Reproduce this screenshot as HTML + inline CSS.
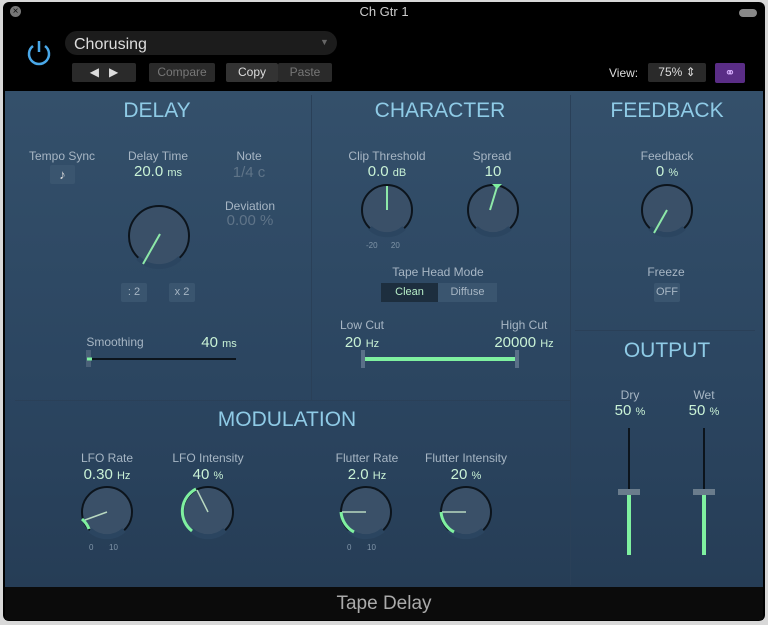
<!DOCTYPE html>
<html><head><meta charset="utf-8"><style>
body{margin:0;width:768px;height:625px;background:#d8d8d8;font-family:"Liberation Sans",sans-serif;overflow:hidden;position:relative}
.a{position:absolute;white-space:nowrap}
.lbl{color:#a7b6c4;font-size:12px;transform:translateX(-50%)}
.val{color:#c9f2d6;font-size:15px;transform:translateX(-50%)}
.val small{font-size:11px}
.ttl{color:#8fcbe6;font-size:21px;transform:translateX(-50%)}
.btn{background:#2a2a2a;color:#777;font-size:12px;text-align:center;line-height:19px;height:19px;border-radius:2px}
.sb{background:#3a556f;color:#a7b6c4;font-size:11px;text-align:center;line-height:19px;height:19px;border-radius:2px}
</style></head><body>
<div class="a" style="left:3px;top:2px;width:762px;height:619px;background:#000;border-radius:6px"></div>
<div class="a" style="left:10px;top:6px;width:11px;height:11px;border-radius:50%;background:#777;color:#111;font-size:10px;line-height:11px;text-align:center">×</div>
<div class="a" style="left:739px;top:9px;width:18px;height:8px;border-radius:4px;background:#888"></div>
<div class="a" style="left:0;top:4px;width:768px;text-align:center;color:#ccc;font-size:13px">Ch Gtr 1</div>
<svg class="a" style="left:24px;top:38px" width="30" height="30"><path d="M9 8 A10 10 0 1 0 21 8" fill="none" stroke="#4aa8e8" stroke-width="2.5"/><line x1="15" y1="3" x2="15" y2="14" stroke="#4aa8e8" stroke-width="2.5"/></svg>
<div class="a" style="left:65px;top:31px;width:272px;height:24px;border-radius:12px;background:#1c1c1c"></div>
<div class="a" style="left:74px;top:36px;color:#ddd;font-size:16px">Chorusing</div>
<div class="a" style="left:320px;top:37px;color:#666;font-size:9px">▼</div>
<div class="a btn" style="left:72px;top:63px;width:64px;color:#ddd">◀ &nbsp; ▶</div>
<div class="a btn" style="left:149px;top:63px;width:66px">Compare</div>
<div class="a btn" style="left:226px;top:63px;width:52px;background:#333;color:#ddd">Copy</div>
<div class="a btn" style="left:278px;top:63px;width:54px">Paste</div>
<div class="a" style="left:609px;top:66px;color:#ddd;font-size:12px">View:</div>
<div class="a btn" style="left:648px;top:63px;width:58px;color:#ddd;background:#2a2a2a">75% ⇕</div>
<div class="a" style="left:715px;top:63px;width:30px;height:20px;background:#5a2d86;border-radius:2px;color:#d9b0ff;font-size:13px;text-align:center;line-height:20px">⚭</div>
<div class="a" style="left:5px;top:91px;width:758px;height:496px;background:linear-gradient(#34506b,#2b4560 60%,#263d56)"></div>
<div class="a" style="left:5px;top:587px;width:758px;height:33px;background:#0b0b0b;color:#aaa;font-size:19px;text-align:center;line-height:33px">Tape Delay</div>
<div class="a" style="left:311px;top:95px;width:1px;height:305px;background:#2a4058"></div>
<div class="a" style="left:570px;top:95px;width:1px;height:490px;background:#2a4058"></div>
<div class="a" style="left:15px;top:400px;width:555px;height:1px;background:#2a4058"></div>
<div class="a" style="left:575px;top:330px;width:180px;height:1px;background:#2a4058"></div>
<div class="a ttl" style="left:157px;top:99px">DELAY</div>
<div class="a ttl" style="left:440px;top:99px">CHARACTER</div>
<div class="a ttl" style="left:667px;top:99px">FEEDBACK</div>
<div class="a ttl" style="left:667px;top:339px">OUTPUT</div>
<div class="a ttl" style="left:287px;top:408px">MODULATION</div>
<div class="a lbl" style="left:62px;top:149px">Tempo Sync</div>
<div class="a sb" style="left:50px;top:165px;width:25px;color:#ddd;font-size:13px">♪</div>
<div class="a lbl" style="left:158px;top:149px">Delay Time</div>
<div class="a val" style="left:158px;top:163px">20.0 <small>ms</small></div>
<div class="a lbl" style="left:249px;top:149px">Note</div>
<div class="a val" style="left:249px;top:164px;color:#5f7488">1/4 c</div>
<div class="a lbl" style="left:250px;top:199px">Deviation</div>
<div class="a val" style="left:250px;top:212px;color:#5f7488">0.00 %</div>
<div class="a sb" style="left:121px;top:283px;width:26px">: 2</div>
<div class="a sb" style="left:169px;top:283px;width:26px">x 2</div>
<div class="a lbl" style="left:115px;top:335px">Smoothing</div>
<div class="a val" style="left:219px;top:334px">40 <small>ms</small></div>
<div class="a lbl" style="left:387px;top:149px">Clip Threshold</div>
<div class="a val" style="left:387px;top:163px">0.0 <small>dB</small></div>
<div class="a lbl" style="left:492px;top:149px">Spread</div>
<div class="a val" style="left:493px;top:163px">10</div>
<div class="a" style="left:366px;top:241px;color:#8095a8;font-size:8px">-20 &nbsp; &nbsp; &nbsp;20</div>
<div class="a lbl" style="left:438px;top:265px">Tape Head Mode</div>
<div class="a" style="left:381px;top:283px;width:57px;height:19px;background:#1d2e3e;color:#b7eec8;font-size:11px;text-align:center;line-height:19px">Clean</div>
<div class="a sb" style="left:438px;top:283px;width:59px;border-radius:0">Diffuse</div>
<div class="a lbl" style="left:362px;top:318px">Low Cut</div>
<div class="a val" style="left:362px;top:334px">20 <small>Hz</small></div>
<div class="a lbl" style="left:524px;top:318px">High Cut</div>
<div class="a val" style="left:524px;top:334px">20000 <small>Hz</small></div>
<div class="a lbl" style="left:667px;top:149px">Feedback</div>
<div class="a val" style="left:667px;top:163px">0 <small>%</small></div>
<div class="a lbl" style="left:666px;top:265px">Freeze</div>
<div class="a sb" style="left:654px;top:283px;width:26px">OFF</div>
<div class="a lbl" style="left:630px;top:388px">Dry</div>
<div class="a val" style="left:630px;top:402px">50 <small>%</small></div>
<div class="a lbl" style="left:704px;top:388px">Wet</div>
<div class="a val" style="left:704px;top:402px">50 <small>%</small></div>
<div class="a lbl" style="left:107px;top:451px">LFO Rate</div>
<div class="a val" style="left:107px;top:466px">0.30 <small>Hz</small></div>
<div class="a lbl" style="left:208px;top:451px">LFO Intensity</div>
<div class="a val" style="left:208px;top:466px">40 <small>%</small></div>
<div class="a lbl" style="left:367px;top:451px">Flutter Rate</div>
<div class="a val" style="left:367px;top:466px">2.0 <small>Hz</small></div>
<div class="a lbl" style="left:466px;top:451px">Flutter Intensity</div>
<div class="a val" style="left:466px;top:466px">20 <small>%</small></div>
<div class="a" style="left:89px;top:543px;color:#8095a8;font-size:8px">0 &nbsp; &nbsp; &nbsp; 10</div>
<div class="a" style="left:347px;top:543px;color:#8095a8;font-size:8px">0 &nbsp; &nbsp; &nbsp; 10</div>
<svg class="a" style="left:0;top:0" width="768" height="625">
<g stroke-linecap="round" fill="#3a5068">
<circle cx="159" cy="236" r="30" stroke="#0c141c" stroke-width="2"/>
<circle cx="387" cy="210" r="25" stroke="#0c141c" stroke-width="2"/>
<circle cx="493" cy="210" r="25" stroke="#0c141c" stroke-width="2"/>
<circle cx="667" cy="210" r="25" stroke="#0c141c" stroke-width="2"/>
<circle cx="107" cy="512" r="25" stroke="#0c141c" stroke-width="2"/>
<circle cx="208" cy="512" r="25" stroke="#0c141c" stroke-width="2"/>
<circle cx="366" cy="512" r="25" stroke="#0c141c" stroke-width="2"/>
<circle cx="466" cy="512" r="25" stroke="#0c141c" stroke-width="2"/>
</g>
<g stroke="#2b4560" stroke-width="5" fill="none">
<path d="M138 258 A30 30 0 0 0 180 258"/>
<path d="M370 228 A25 25 0 0 0 404 228"/>
<path d="M476 228 A25 25 0 0 0 510 228"/>
<path d="M650 228 A25 25 0 0 0 684 228"/>
<path d="M90 530 A25 25 0 0 0 124 530"/>
<path d="M191 530 A25 25 0 0 0 225 530"/>
<path d="M349 530 A25 25 0 0 0 383 530"/>
<path d="M449 530 A25 25 0 0 0 483 530"/>
</g>
<g stroke="#8de8a8" stroke-width="2">
<line x1="160" y1="234" x2="143" y2="264"/>
<line x1="387" y1="210" x2="387" y2="186"/>
<line x1="490" y1="210" x2="497" y2="187"/>
<line x1="667" y1="210" x2="654" y2="233"/>
</g>
<g stroke="#b8d8c0" stroke-width="1.5">
<line x1="107" y1="512" x2="85" y2="520"/>
<line x1="208" y1="512" x2="197" y2="490"/>
<line x1="366" y1="512" x2="342" y2="512"/>
<line x1="466" y1="512" x2="442" y2="512"/>
</g>
<g stroke="#7ff0a0" stroke-width="3" fill="none">
<path d="M89 529 A25 25 0 0 0 82 519"/>
<path d="M192 531 A25 25 0 0 1 196 489"/>
<path d="M354 532 A25 25 0 0 1 341 512"/>
<path d="M454 532 A25 25 0 0 1 441 512"/>
<path d="M492 184 l10 0 l-5 5 z" fill="#7ff0a0" stroke="none"/>
</g>
<line x1="90" y1="359" x2="236" y2="359" stroke="#0c141c" stroke-width="2"/>
<rect x="86" y="350" width="5" height="17" fill="#4a6078"/>
<line x1="87" y1="359" x2="92" y2="359" stroke="#7ff0a0" stroke-width="3"/>
<line x1="363" y1="359" x2="517" y2="359" stroke="#7ff0a0" stroke-width="4"/>
<rect x="361" y="350" width="4" height="18" fill="#5a7088"/>
<rect x="515" y="350" width="4" height="18" fill="#5a7088"/>
<line x1="629" y1="428" x2="629" y2="492" stroke="#0c141c" stroke-width="2"/>
<line x1="629" y1="492" x2="629" y2="555" stroke="#7ff0a0" stroke-width="4"/>
<rect x="618" y="489" width="22" height="6" fill="#6a7c8c"/>
<line x1="704" y1="428" x2="704" y2="492" stroke="#0c141c" stroke-width="2"/>
<line x1="704" y1="492" x2="704" y2="555" stroke="#7ff0a0" stroke-width="4"/>
<rect x="693" y="489" width="22" height="6" fill="#6a7c8c"/>
</svg>
</body></html>
